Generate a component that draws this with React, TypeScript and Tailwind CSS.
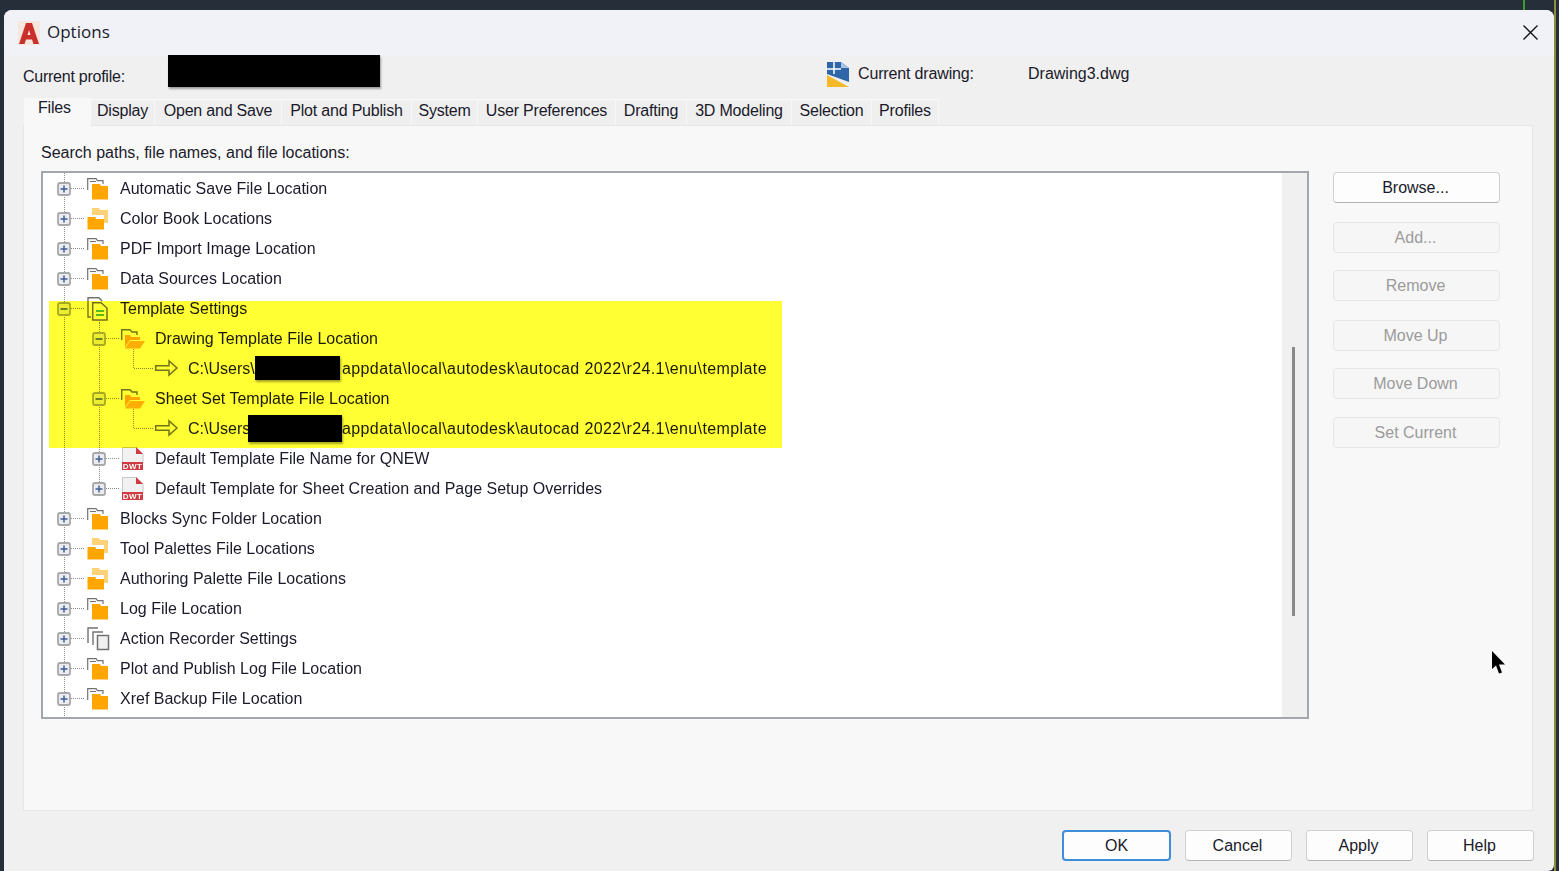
import React from "react";

type IconKind = "folder" | "folders" | "doc" | "open" | "arrow" | "dwt" | "copies";

type Row = {
  label: string;
  level: 0 | 1 | 2;
  icon: IconKind;
  toggle?: "plus" | "minus";
  down?: boolean; // level 1 line carries on to the next row
  inner?: boolean; // level 1 line comes in from the row above
  redact?: { lead: number; w: number; h: number; gap: number };
};

const ROWS: Row[] = [
  { label: "Automatic Save File Location", level: 0, icon: "folder", toggle: "plus" },
  { label: "Color Book Locations", level: 0, icon: "folders", toggle: "plus" },
  { label: "PDF Import Image Location", level: 0, icon: "folder", toggle: "plus" },
  { label: "Data Sources Location", level: 0, icon: "folder", toggle: "plus" },
  { label: "Template Settings", level: 0, icon: "doc", toggle: "minus", down: true },
  { label: "Drawing Template File Location", level: 1, icon: "open", toggle: "minus", inner: true, down: true },
  { label: "appdata\\local\\autodesk\\autocad 2022\\r24.1\\enu\\template", level: 2, icon: "arrow", inner: true, down: true, redact: { lead: 67, w: 85, h: 24, gap: 2 } },
  { label: "Sheet Set Template File Location", level: 1, icon: "open", toggle: "minus", inner: true, down: true },
  { label: "appdata\\local\\autodesk\\autocad 2022\\r24.1\\enu\\template", level: 2, icon: "arrow", inner: true, down: true, redact: { lead: 60, w: 94, h: 27, gap: 0 } },
  { label: "Default Template File Name for QNEW", level: 1, icon: "dwt", toggle: "plus", inner: true, down: true },
  { label: "Default Template for Sheet Creation and Page Setup Overrides", level: 1, icon: "dwt", toggle: "plus", inner: true },
  { label: "Blocks Sync Folder Location", level: 0, icon: "folder", toggle: "plus" },
  { label: "Tool Palettes File Locations", level: 0, icon: "folders", toggle: "plus" },
  { label: "Authoring Palette File Locations", level: 0, icon: "folders", toggle: "plus" },
  { label: "Log File Location", level: 0, icon: "folder", toggle: "plus" },
  { label: "Action Recorder Settings", level: 0, icon: "copies", toggle: "plus" },
  { label: "Plot and Publish Log File Location", level: 0, icon: "folder", toggle: "plus" },
  { label: "Xref Backup File Location", level: 0, icon: "folder", toggle: "plus" },
];

const TABS = [
  { label: "Display", w: "w-[63px]" },
  { label: "Open and Save", w: "w-[126px]" },
  { label: "Plot and Publish", w: "w-[129px]" },
  { label: "System", w: "w-[65px]" },
  { label: "User Preferences", w: "w-[137px]" },
  { label: "Drafting", w: "w-[70px]" },
  { label: "3D Modeling", w: "w-[104px]" },
  { label: "Selection", w: "w-[79px]" },
  { label: "Profiles", w: "w-[66px]" },
];

const SIDE_BUTTONS = [
  { label: "Browse...", mt: "mt-0", on: true },
  { label: "Add...", mt: "mt-[19px]" },
  { label: "Remove", mt: "mt-[17px]" },
  { label: "Move Up", mt: "mt-[19px]" },
  { label: "Move Down", mt: "mt-[17px]" },
  { label: "Set Current", mt: "mt-[18px]" },
];

const DOTS = { stroke: "#8c8c8c", strokeWidth: 1, strokeDasharray: "1 1", fill: "none" };

function Icon({ kind, x }: { kind: IconKind; x: number }) {
  const gray = "#727272";
  const orange = "#ffa500";
  if (kind === "folder") {
    return (
      <g transform={`translate(${x} 0)`}>
        <path d="M0.7 17V5.7H9L10.5 7.7H16V11M3 8.5H9" fill="none" stroke={gray} strokeWidth="1.2" />
        <path d="M5 11H13L14 13H21V26.5H5Z" fill={orange} />
      </g>
    );
  }
  if (kind === "folders") {
    return (
      <g transform={`translate(${x} 0)`}>
        <path d="M5 5H12L13 7H21V20H17V12H5Z" fill="#ffd27a" />
        <path d="M0.5 14H8L9.5 16H17V26.5H0.5Z" fill={orange} />
      </g>
    );
  }
  if (kind === "doc") {
    return (
      <g transform={`translate(${x} 0)`}>
        <path d="M4 24H1V4.7H12L15 8" fill="none" stroke={gray} strokeWidth="1.4" />
        <path d="M5.7 9.7H14L20 15V27H5.7Z" fill="#fff" stroke={gray} strokeWidth="1.5" />
        <path d="M9 18H17M9 22H17" stroke="#22a344" strokeWidth="1.6" />
      </g>
    );
  }
  if (kind === "open") {
    return (
      <g transform={`translate(${x} 0)`}>
        <path d="M1.7 17V6.7H10L12 9H17V12" fill="none" stroke={gray} strokeWidth="1.4" />
        <path d="M5 12H10L11 14H20V17H10L5 24Z" fill={orange} />
        <path d="M10 18H25L20 25.5H5Z" fill="#ffae1a" />
      </g>
    );
  }
  if (kind === "arrow") {
    return (
      <g transform={`translate(${x} 0)`}>
        <path d="M0.7 12.7H14V8L22 15L14 22V17.3H0.7Z" fill="#fff" stroke={gray} strokeWidth="1.5" />
      </g>
    );
  }
  if (kind === "dwt") {
    return (
      <g transform={`translate(${x} 0)`}>
        <path d="M0.5 4.5H14L21 11V20H0.5Z" fill="#f1f1f1" stroke="#c9c9c9" />
        <path d="M14 4L21 11H14Z" fill="#cf3b40" />
        <rect x="0" y="19" width="21" height="8" fill="#cf3b40" />
        <text x="10.5" y="26" textAnchor="middle" fontSize="8" letterSpacing="0.4" fontWeight="700" fill="#fff" fontFamily="Liberation Sans">
          DWT
        </text>
      </g>
    );
  }
  return (
    <g transform={`translate(${x} 0)`}>
      <path d="M1 20V5H11" fill="none" stroke={gray} strokeWidth="1.4" />
      <path d="M6 22V9H16" fill="none" stroke={gray} strokeWidth="1.4" />
      <rect x="10.5" y="12.5" width="11" height="14" fill="#f0f0f0" stroke={gray} strokeWidth="1.5" />
    </g>
  );
}

function Toggle({ x, kind }: { x: number; kind: "plus" | "minus" }) {
  return (
    <g>
      <rect x={x} y="10" width="12" height="12" rx="2" fill="#ececf0" stroke="#a8a8a8" strokeWidth="1.8" />
      <path d={kind === "plus" ? `M${x + 2.5} 16H${x + 9.5}M${x + 6} 12.5V19.5` : `M${x + 2.5} 16H${x + 9.5}`} stroke="#3e5f94" strokeWidth="1.5" />
    </g>
  );
}

function TreeRow({ row }: { row: Row }) {
  const textX = row.level === 0 ? 120 : row.level === 1 ? 155 : 188;
  const width = textX - 43;
  return (
    <div className="flex h-[30px] shrink-0 items-center">
      <svg className="shrink-0" width={width} height={30} viewBox={`43 0 ${width} 30`}>
        <path d="M64.5 0V30" {...DOTS} />
        {row.level === 0 && row.down && <path d="M99.5 23V30" {...DOTS} />}
        {row.level === 1 && row.inner && <path d={row.down ? "M99.5 0V30" : "M99.5 0V15"} {...DOTS} />}
        {row.level === 1 && row.icon === "open" && <path d="M133.5 26V30" {...DOTS} />}
        {row.level === 2 && <path d="M99.5 0V30M133.5 0V15.5H153" {...DOTS} />}
        {row.level === 0 && <path d="M71 15.5H85" {...DOTS} />}
        {row.level === 1 && <path d="M106 15.5H119" {...DOTS} />}
        {row.level === 0 && <Toggle x={58} kind={row.toggle ?? "plus"} />}
        {row.level === 1 && <Toggle x={93} kind={row.toggle ?? "plus"} />}
        <Icon kind={row.icon} x={row.level === 0 ? 87 : row.level === 1 ? (row.icon === "dwt" ? 122 : 120) : 155} />
      </svg>
      {row.redact ? (
        <div className="flex items-center">
          <span className="whitespace-nowrap pt-px" style={{ width: row.redact.lead }}>
            C:\Users\
          </span>
          <span className="bg-black shadow-[1px_2px_2px_rgba(0,0,0,0.35)]" style={{ width: row.redact.w, height: row.redact.h, marginRight: row.redact.gap }} />
          <span className="whitespace-nowrap pt-px tracking-[0.39px]">{row.label}</span>
        </div>
      ) : (
        <span className="whitespace-nowrap pt-px">{row.label}</span>
      )}
    </div>
  );
}

function Btn({ label, on, className }: { label: string; on?: boolean; className: string }) {
  return (
    <div
      className={`flex h-[31px] items-center justify-center rounded-[4px] border pr-[2px] ${
        on ? "border-[#d0d0d0] border-b-[#b4b4b4] bg-[#fdfdfd] text-[#1a1a2a]" : "border-[#e6e6e6] bg-[#f6f6f6] text-[#9b9b9b]"
      } ${className}`}
    >
      {label}
    </div>
  );
}

export default function App() {
  return (
    <div className="relative flex h-[871px] w-[1559px] flex-col overflow-hidden bg-[#262e3a] pt-[10px] pl-[4px] pr-[5px] font-['Liberation_Sans',sans-serif] text-[16px] text-[#1a1a2a]">
      <div className="absolute left-[1523px] top-0 h-[10px] w-[2px] bg-[#3aa02a]" />
      <div className="absolute left-[1554px] top-0 h-full w-[2px] bg-[#8d8d3a]" />
      <div className="relative flex flex-1 flex-col overflow-hidden rounded-t-[8px] rounded-br-[6px] bg-[#f0f0f0]">
        {/* title bar */}
        <div className="flex h-[45px] shrink-0 items-center bg-[#f1f2f8] pl-[14px] pr-[16px]">
          <svg width="22" height="24" viewBox="0 0 22 24">
            <rect width="22" height="24" fill="#f7e6dc" />
            <path fillRule="evenodd" d="M1 23L8 2H14L21 23H15.5L14 18.5H8L6.5 23ZM9.5 14H12.5L11 9Z" fill="#c9302c" />
          </svg>
          <span className="ml-[7px] pb-[2px] font-['Open_Sans',sans-serif] text-[17px]">Options</span>
          <svg className="ml-auto" width="15" height="15" viewBox="0 0 15 15">
            <path d="M0.5 0.5L14.5 14.5M14.5 0.5L0.5 14.5" stroke="#111" strokeWidth="1.3" />
          </svg>
        </div>

        {/* profile line */}
        <div className="flex h-[42px] shrink-0 pl-[19px]">
          <span className="mt-[10px] w-[145px] tracking-[-0.25px]">Current profile:</span>
          <div className="h-[32px] w-[212px] bg-black shadow-[1px_2px_2px_rgba(0,0,0,0.35)]" />
          <svg className="ml-[447px] mt-[7px]" width="22" height="25" viewBox="0 0 22 25">
            <path d="M0 0H14L22 6V20L0 12Z" fill="#2f66a8" />
            <path d="M14 0L22 6H14Z" fill="#a9c4e4" />
            <path d="M0 13L22 25H0Z" fill="#f5b82a" />
            <path d="M7 0V12M0 7H14" stroke="#fff" strokeWidth="1.5" />
          </svg>
          <span className="ml-[9px] mt-[7px] w-[170px] tracking-[-0.15px]">Current drawing:</span>
          <span className="mt-[7px]">Drawing3.dwg</span>
        </div>

        {/* tabs */}
        <div className="flex h-[28px] shrink-0 items-end pl-[20px]">
          <div className="z-10 mb-[-1px] h-[28px] w-[67px] bg-[#f8f8f8] pl-[14px] leading-[20px] tracking-[-0.2px]">Files</div>
          <div className="flex h-[26px] gap-px bg-[#f8f8f8] pt-px pr-px">
            {TABS.map((t) => (
              <div key={t.label} className={`flex h-[25px] items-center justify-center bg-[#efefef] pb-[3px] tracking-[-0.2px] ${t.w}`}>
                {t.label}
              </div>
            ))}
          </div>
        </div>

        {/* panel */}
        <div className="relative ml-[19px] mr-[21px] flex h-[686px] shrink-0 flex-col border border-[#e6e6e6] bg-[#f8f8f8] pl-[17px] pt-[16px]">
          <div className="h-[29px] leading-[22px]">Search paths, file names, and file locations:</div>
          <div className="flex">
            <div className="relative isolate flex h-[548px] w-[1268px] shrink-0 overflow-hidden border-2 border-[#a3a7ab] bg-white">
              <div className="flex flex-1 flex-col">
                {ROWS.map((r, i) => (
                  <TreeRow key={i} row={r} />
                ))}
                <svg width="30" height="4" viewBox="43 0 30 4">
                  <path d="M64.5 0V4" {...DOTS} />
                </svg>
              </div>
              <div className="w-[25px] shrink-0 bg-[#f0f0f0] pl-[10px] pt-[174px]">
                <div className="h-[269px] w-[3px] bg-[#8a8a8a]" />
              </div>
              <div className="absolute left-[6px] top-[128px] h-[147px] w-[733px] bg-[#ffff33] mix-blend-multiply" />
            </div>
            <div className="ml-[24px] flex w-[167px] flex-col pt-[1px]">
              {SIDE_BUTTONS.map((b) => (
                <Btn key={b.label} label={b.label} on={b.on} className={b.mt} />
              ))}
            </div>
          </div>
        </div>

        {/* footer */}
        <div className="flex shrink-0 justify-end gap-[14px] pr-[20px] pt-[19px]">
          <div className="flex h-[31px] w-[109px] items-center justify-center rounded-[4px] border-2 border-[#3f8fd8] bg-[#fdfdfd]">OK</div>
          <Btn label="Cancel" on className="w-[107px]" />
          <Btn label="Apply" on className="w-[107px]" />
          <Btn label="Help" on className="w-[107px]" />
        </div>
      </div>

      {/* mouse pointer */}
      <svg className="absolute left-[1491px] top-[651px]" width="15" height="24" viewBox="0 0 15 24">
        <path d="M1 0V18L5 14.5L8 22.5L11 21.5L8 13.5H14Z" fill="#000" />
      </svg>
    </div>
  );
}
